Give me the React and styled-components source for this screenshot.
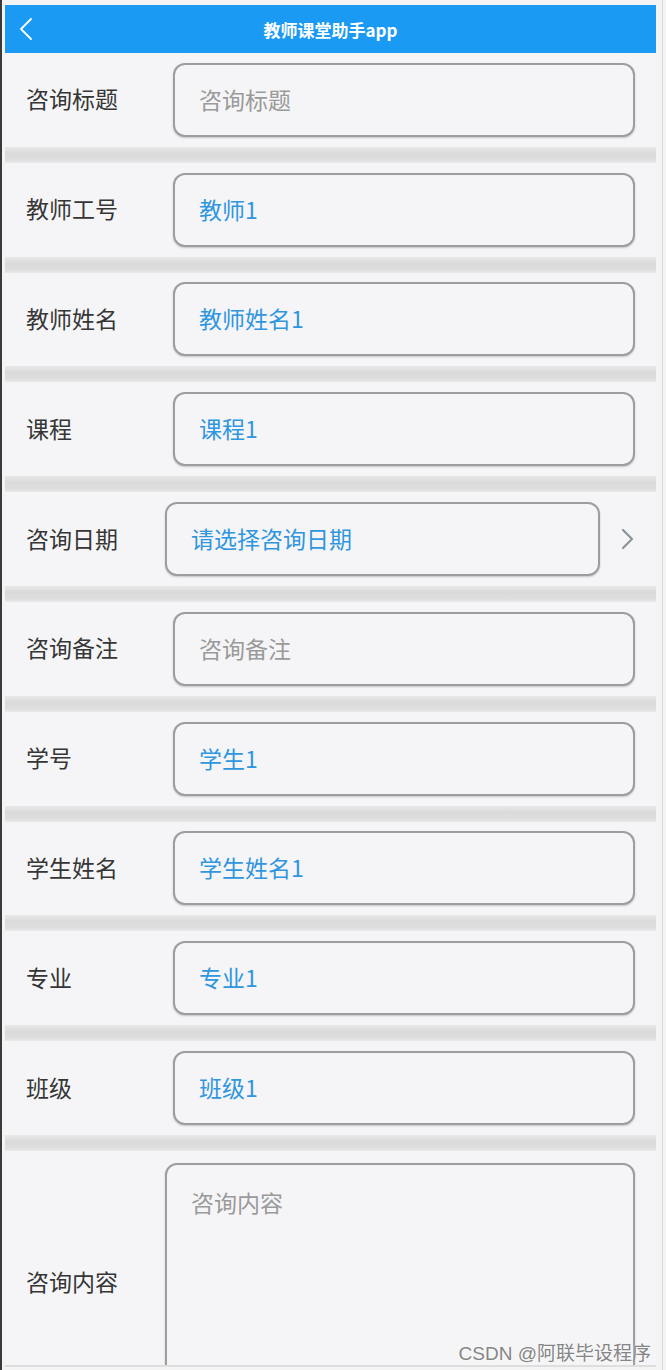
import React from "react";
import styled, { createGlobalStyle } from "styled-components";

const Global = createGlobalStyle`
  html, body { margin: 0; padding: 0; background: #f7f7f8; }
  body { font-family: "Microsoft YaHei", "Noto Sans CJK SC", "Noto Sans", sans-serif; }
`;

const Page = styled.div`
  position: relative;
  width: 666px;
  height: 1370px;
  box-sizing: border-box;
  padding: 5px 10px 5px 5px;
  border-left: 2px solid #3a3a3a;
  background: #f4f4f5;
  overflow: hidden;
`;

const Edge = styled.div`
  position: absolute;
  top: 0;
  bottom: 0;
  right: 3px;
  width: 1px;
  background: #dcdcdc;
`;

const Screen = styled.div`
  width: 651px;
  height: 1360px;
  margin-left: -2px;
  display: flex;
  flex-direction: column;
  background: #f5f5f7;
  border-bottom: 2px solid #dedede;
  overflow: hidden;
`;

const Header = styled.header`
  flex: 0 0 48px;
  position: relative;
  display: flex;
  align-items: center;
  justify-content: center;
  background: #1b9af4;
  color: #fff;
  font-size: 17px;
  font-weight: 700;
`;

const Back = styled.button`
  position: absolute;
  left: 13px;
  top: 12px;
  width: 16px;
  height: 24px;
  padding: 0;
  border: 0;
  background: none;
  display: flex;
  align-items: center;
  justify-content: center;
`;

const Row = styled.div`
  flex: 0 0 ${(p) => p.$h || 93.8}px;
  display: flex;
  align-items: center;
  box-sizing: border-box;
  padding: ${(p) => (p.$tall ? "12px 21px 12px 21px" : "0 21px")};
`;

const Separator = styled.div`
  flex: 0 0 16px;
  background: linear-gradient(#e8e8e8 0%, #dadada 40%, #dedede 80%, #e9e9e9 100%);
`;

const Label = styled.div`
  flex: 0 0 ${(p) => p.$w}px;
  font-size: 23px;
  color: #363636;
  line-height: 1;
  margin-top: -2px;
  align-self: center;
`;

const Field = styled.div`
  flex: 1;
  height: ${(p) => (p.$tall ? "240px" : "74px")};
  align-self: ${(p) => (p.$tall ? "flex-start" : "center")};
  box-sizing: border-box;
  border: 2px solid #9d9d9d;
  border-radius: 12px;
  box-shadow: 0 1px 2px rgba(0, 0, 0, 0.2);
  display: flex;
  align-items: ${(p) => (p.$tall ? "flex-start" : "center")};
  padding: ${(p) => (p.$tall ? "22px 24px" : "0 24px 2px")};
  font-size: 23px;
  line-height: 30px;
  color: ${(p) => (p.$value ? "#3096de" : "#9a9a9a")};
  background: #f5f5f7;
`;

const Chevron = styled.div`
  flex: 0 0 35px;
  display: flex;
  justify-content: flex-end;
  align-items: center;
`;

const Watermark = styled.div`
  position: absolute;
  right: 15px;
  bottom: 5px;
  font-family: "Liberation Sans", "Noto Sans CJK SC", sans-serif;
  font-size: 19px;
  color: #858585;
  text-shadow: 0 0 2px #fff;
`;

const rows = [
  { label: "咨询标题", text: "咨询标题" },
  { label: "教师工号", text: "教师1", value: true },
  { label: "教师姓名", text: "教师姓名1", value: true },
  { label: "课程", text: "课程1", value: true },
  { label: "咨询日期", text: "请选择咨询日期", value: true, picker: true },
  { label: "咨询备注", text: "咨询备注" },
  { label: "学号", text: "学生1", value: true },
  { label: "学生姓名", text: "学生姓名1", value: true },
  { label: "专业", text: "专业1", value: true },
  { label: "班级", text: "班级1", value: true },
];

export default function App() {
  return (
    <>
      <Global />
      <Page>
        <Edge />
        <Screen>
          <Header>
            <Back aria-label="返回">
              <svg width="14" height="24" viewBox="0 0 14 24">
                <polyline points="12,2 2,12 12,22" fill="none" stroke="#fff" strokeWidth="1.8" strokeLinecap="round" strokeLinejoin="round" />
              </svg>
            </Back>
            教师课堂助手app
          </Header>
          {rows.map((r, i) => (
            <React.Fragment key={r.label}>
              {i > 0 && <Separator />}
              <Row>
                <Label $w={r.picker ? 139 : 147}>{r.label}</Label>
                <Field $value={r.value}>{r.text}</Field>
                {r.picker && (
                  <Chevron>
                    <svg width="14" height="24" viewBox="0 0 14 24">
                      <polyline points="2,3 11,12 2,21" fill="none" stroke="#8a949b" strokeWidth="2.2" strokeLinecap="round" strokeLinejoin="round" />
                    </svg>
                  </Chevron>
                )}
              </Row>
            </React.Fragment>
          ))}
          <Separator />
          <Row $h={264} $tall>
            <Label $w={139}>咨询内容</Label>
            <Field $tall>咨询内容</Field>
          </Row>
        </Screen>
        <Watermark>CSDN @阿联毕设程序</Watermark>
      </Page>
    </>
  );
}
